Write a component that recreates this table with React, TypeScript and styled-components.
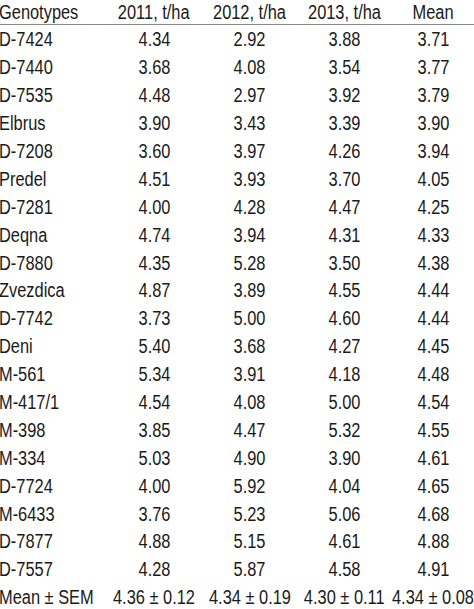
import styled, { createGlobalStyle } from "styled-components";

interface IRow {
  genotype: string;
  y2011: string;
  y2012: string;
  y2013: string;
  mean: string;
}

const rows: IRow[] = [
  { genotype: "D-7424", y2011: "4.34", y2012: "2.92", y2013: "3.88", mean: "3.71" },
  { genotype: "D-7440", y2011: "3.68", y2012: "4.08", y2013: "3.54", mean: "3.77" },
  { genotype: "D-7535", y2011: "4.48", y2012: "2.97", y2013: "3.92", mean: "3.79" },
  { genotype: "Elbrus", y2011: "3.90", y2012: "3.43", y2013: "3.39", mean: "3.90" },
  { genotype: "D-7208", y2011: "3.60", y2012: "3.97", y2013: "4.26", mean: "3.94" },
  { genotype: "Predel", y2011: "4.51", y2012: "3.93", y2013: "3.70", mean: "4.05" },
  { genotype: "D-7281", y2011: "4.00", y2012: "4.28", y2013: "4.47", mean: "4.25" },
  { genotype: "Deqna", y2011: "4.74", y2012: "3.94", y2013: "4.31", mean: "4.33" },
  { genotype: "D-7880", y2011: "4.35", y2012: "5.28", y2013: "3.50", mean: "4.38" },
  { genotype: "Zvezdica", y2011: "4.87", y2012: "3.89", y2013: "4.55", mean: "4.44" },
  { genotype: "D-7742", y2011: "3.73", y2012: "5.00", y2013: "4.60", mean: "4.44" },
  { genotype: "Deni", y2011: "5.40", y2012: "3.68", y2013: "4.27", mean: "4.45" },
  { genotype: "M-561", y2011: "5.34", y2012: "3.91", y2013: "4.18", mean: "4.48" },
  { genotype: "M-417/1", y2011: "4.54", y2012: "4.08", y2013: "5.00", mean: "4.54" },
  { genotype: "M-398", y2011: "3.85", y2012: "4.47", y2013: "5.32", mean: "4.55" },
  { genotype: "M-334", y2011: "5.03", y2012: "4.90", y2013: "3.90", mean: "4.61" },
  { genotype: "D-7724", y2011: "4.00", y2012: "5.92", y2013: "4.04", mean: "4.65" },
  { genotype: "M-6433", y2011: "3.76", y2012: "5.23", y2013: "5.06", mean: "4.68" },
  { genotype: "D-7877", y2011: "4.88", y2012: "5.15", y2013: "4.61", mean: "4.88" },
  { genotype: "D-7557", y2011: "4.28", y2012: "5.87", y2013: "4.58", mean: "4.91" },
  {
    genotype: "Mean ± SEM",
    y2011: "4.36 ± 0.12",
    y2012: "4.34 ± 0.19",
    y2013: "4.30 ± 0.11",
    mean: "4.34 ± 0.08",
  },
];

const GlobalStyle = createGlobalStyle`
  html, body {
    margin: 0;
    padding: 0;
    background: #ffffff;
    overflow: hidden;
  }
`;

const App = () => {
  return (
    <>
      <GlobalStyle />
      <Table>
        <Header>
          <Cell $left><Narrow $left>Genotypes</Narrow></Cell>
          <Cell><Narrow>2011, t/ha</Narrow></Cell>
          <Cell><Narrow>2012, t/ha</Narrow></Cell>
          <Cell><Narrow>2013, t/ha</Narrow></Cell>
          <Cell><Narrow>Mean</Narrow></Cell>
        </Header>
        <Body>
          {rows.map((r) => (
            <Row key={r.genotype}>
              <Cell $left><Narrow $left>{r.genotype}</Narrow></Cell>
              <Cell><Narrow>{r.y2011}</Narrow></Cell>
              <Cell><Narrow>{r.y2012}</Narrow></Cell>
              <Cell><Narrow>{r.y2013}</Narrow></Cell>
              <Cell><Narrow>{r.mean}</Narrow></Cell>
            </Row>
          ))}
        </Body>
      </Table>
    </>
  );
};

const Table = styled.div`
  width: 474px;
  height: 609px;
  overflow: hidden;
  font-family: "Liberation Sans", Arial, sans-serif;
  font-size: 20px;
  color: #1a1a1a;
`;

const Row = styled.div`
  display: grid;
  grid-template-columns: 106px 96px 95px 95px 82px;
  align-items: center;
  height: 27.9px;
`;

const Header = styled(Row)`
  height: 24px;
  border-bottom: 1px solid #8a8a8a;
`;

const Body = styled.div`
  padding-top: 1px;
`;

const Cell = styled.div<{ $left?: boolean }>`
  display: flex;
  justify-content: ${(p) => (p.$left ? "flex-start" : "center")};
  white-space: nowrap;
  min-width: 0;
  margin-left: ${(p) => (p.$left ? "-1px" : "0")};
`;

/* the source uses a narrow face; squeeze Liberation Sans to match */
const Narrow = styled.span<{ $left?: boolean }>`
  flex: none;
  display: inline-block;
  transform: scaleX(0.82);
  transform-origin: ${(p) => (p.$left ? "left center" : "center center")};
`;

export default App;
